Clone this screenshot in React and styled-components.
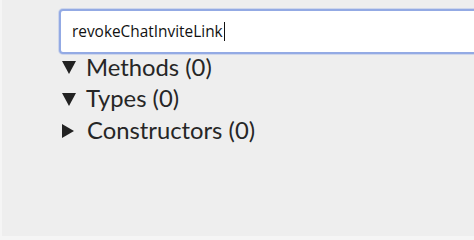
import React from 'react';
import styled, { createGlobalStyle } from 'styled-components';

const Global = createGlobalStyle`
  html, body {
    margin: 0;
    padding: 0;
    background: #f5f5f5;
    overflow: hidden;
  }
`;

const Panel = styled.div`
  box-sizing: border-box;
  height: calc(100vh - 4px);
  margin-left: 2px;
  background: #eeeeee;
  padding: 9px 0 0 57px;
  overflow: hidden;
  font-family: Lato, "Open Sans", sans-serif;
  color: #262626;
`;

const Field = styled.div`
  box-sizing: border-box;
  display: flex;
  align-items: center;
  width: calc(100% + 20px);
  height: 45px;
  border: 2px solid #93aae4;
  border-radius: 4px;
  box-shadow: 0 0 0 1px rgba(147, 170, 228, 0.35);
  background: #fff;
  padding: 0 10px 0 11px;
  font-family: "Open Sans", Lato, sans-serif;
  font-size: 15.4px;
  color: #111;
`;

const Caret = styled.span`
  display: inline-block;
  width: 1px;
  height: 19px;
  margin-left: 1px;
  background: #111;
`;

const List = styled.ul`
  list-style: none;
  margin: -3px 0 0;
  padding: 0 0 0 3px;
`;

const Row = styled.li`
  display: flex;
  align-items: center;
  height: 31.5px;
  font-size: 23.8px;
`;

const Arrow = styled.span`
  display: inline-block;
  width: 0;
  height: 0;
  margin-right: ${p => (p.$open ? '10px' : '13px')};
  margin-top: 2px;
  ${p =>
    p.$open
      ? `
    border-left: 7.5px solid transparent;
    border-right: 7.5px solid transparent;
    border-top: 13px solid #222;
  `
      : `
    border-top: 7px solid transparent;
    border-bottom: 7px solid transparent;
    border-left: 12px solid #222;
  `}
`;

const sections = [
  { name: 'Methods', count: 0, open: true },
  { name: 'Types', count: 0, open: true },
  { name: 'Constructors', count: 0, open: false },
];

export default function App() {
  return (
    <>
      <Global />
      <Panel>
        <Field>
          revokeChatInviteLink
          <Caret />
        </Field>
        <List>
          {sections.map(s => (
            <Row key={s.name}>
              <Arrow $open={s.open} />
              {s.name} ({s.count})
            </Row>
          ))}
        </List>
      </Panel>
    </>
  );
}
